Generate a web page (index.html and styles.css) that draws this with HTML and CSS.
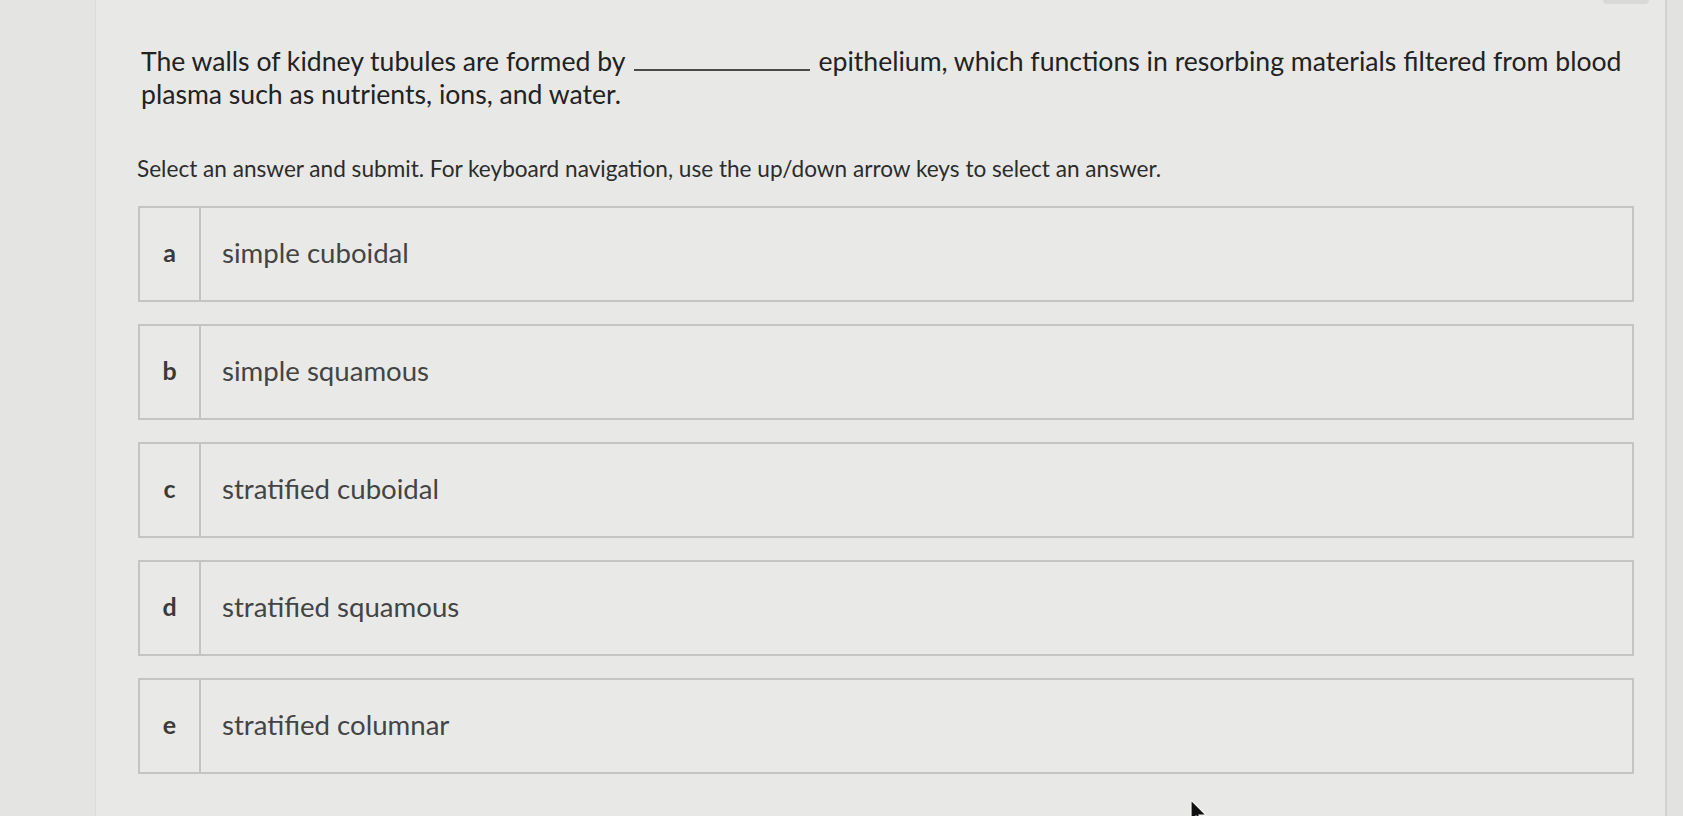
FILE: index.html
```html
<!DOCTYPE html>
<html lang="en">
<head>
    <meta charset="UTF-8">
    <meta name="viewport" content="width=device-width, initial-scale=1.0">
    <title>Question</title>
    <link rel="stylesheet" href="styles.css">
</head>
<body>
    <div class="screen">
        <div class="edge-left"></div>

        <!-- Question panel -->
        <main class="panel">
            <p class="question">The walls of kidney tubules are formed by <span class="blank"></span> epithelium, which functions in resorbing materials filtered from blood plasma such as nutrients, ions, and water.</p>
            <p class="hint">Select an answer and submit. For keyboard navigation, use the up/down arrow keys to select an answer.</p>

            <ul class="choices">
                <li class="choice"><span class="choice-key">a</span><span class="choice-text">simple cuboidal</span></li>
                <li class="choice"><span class="choice-key">b</span><span class="choice-text">simple squamous</span></li>
                <li class="choice"><span class="choice-key">c</span><span class="choice-text">stratified cuboidal</span></li>
                <li class="choice"><span class="choice-key">d</span><span class="choice-text">stratified squamous</span></li>
                <li class="choice"><span class="choice-key">e</span><span class="choice-text">stratified columnar</span></li>
            </ul>
        </main>

        <div class="edge-right"></div>

        <span class="tab-notch"></span>

        <!-- Mouse pointer -->
        <svg class="pointer" width="18" height="28" viewBox="0 0 18 28">
            <path d="M1 1 L1 22 L6 17 L10 26 L13 25 L9 16 L16 16 Z" fill="#111" stroke="#f4f4f4" stroke-width="1.2"/>
        </svg>
    </div>
</body>
</html>
```

FILE: styles.css
```css
/* General Styles */
body {
    margin: 0;
    background-color: #e6e7e5;
    font-family: Lato, "Noto Sans", sans-serif;
    color: #2b2b2b;
    overflow: hidden;
}

.screen {
    position: relative;
    display: flex;
    height: 816px;
}

.edge-left {
    flex: 0 0 95px;
    background-color: #e4e5e3;
    border-right: 1px solid #dadbd9;
}

.edge-right {
    flex: 0 0 16px;
    background-color: #e2e3e1;
    border-left: 2px solid #d2d3d1;
}

.panel {
    flex: 1;
    min-width: 0;
    background-color: #e8e9e7;
    padding: 45px 31px 0 45px;
}

/* Question text */
.question {
    margin: 0;
    font-size: 26.6px;
    line-height: 33px;
    color: #222;
}

.blank {
    display: inline-block;
    width: 176px;
    margin: 0 2px;
    border-bottom: 2px solid #4a4a4a;
}

.hint {
    margin: 43px 0 0 -4px;
    font-size: 22.6px;
    line-height: 30px;
    color: #2c2c2c;
}

/* Answer choices */
.choices {
    list-style: none;
    margin: 22px 0 0 -3px;
    padding: 0;
    display: flex;
    flex-direction: column;
    gap: 22px;
}

.choice {
    display: grid;
    grid-template-columns: 61px 1fr;
    height: 92px;
    border: 2px solid #c4c5c3;
    background-color: #e9eae8;
}

.choice-key {
    display: flex;
    align-items: center;
    justify-content: center;
    border-right: 2px solid #c4c5c3;
    font-size: 25px;
    font-weight: 700;
    color: #3a3a3a;
    padding-bottom: 4px;
}

.choice-text {
    display: flex;
    align-items: center;
    padding: 0 0 4px 21px;
    font-size: 27.6px;
    color: #444;
}

/* Overlays */
.tab-notch {
    position: absolute;
    top: -4px;
    left: 1603px;
    width: 46px;
    height: 8px;
    border-radius: 4px;
    background-color: #d9dad8;
}

.pointer {
    position: absolute;
    left: 1190px;
    top: 799px;
}
```
